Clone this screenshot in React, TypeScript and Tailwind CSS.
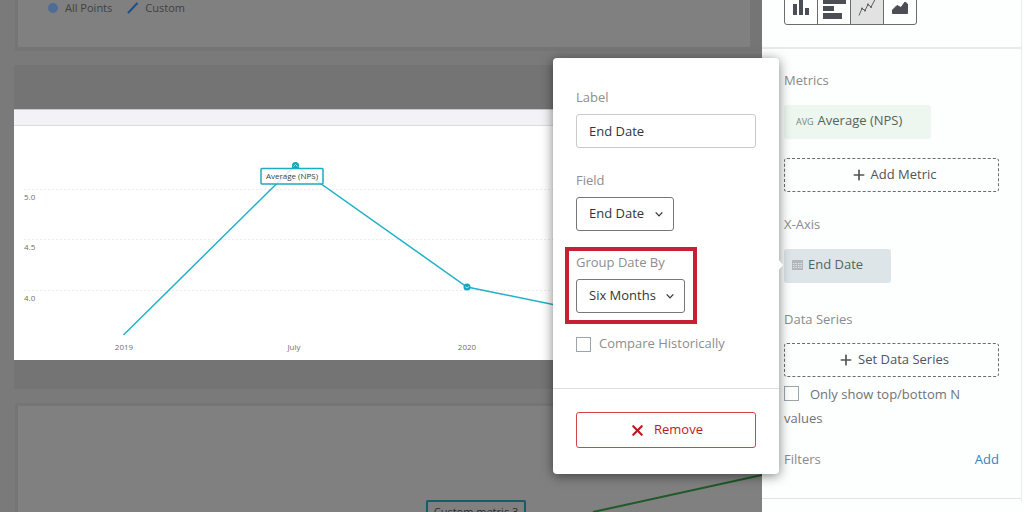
import type { ReactNode } from "react";
import { Plus, X } from "lucide-react";

type SelectFieldProps = {
  id: string;
  label: string;
  value: string;
};

const gridLines = [
  { y: 63, label: "5.0" },
  { y: 113, label: "4.5" },
  { y: 164, label: "4.0" },
];

const xLabels = [
  { x: 110, label: "2019" },
  { x: 280, label: "July" },
  { x: 453, label: "2020" },
];

function SelectField({ id, label, value }: SelectFieldProps) {
  return (
    <div>
      <label htmlFor={id} className="block leading-5 text-[#8e8e8e]">
        {label}
      </label>
      <div className="relative mt-[7px] w-fit">
        <select
          id={id}
          className="block h-[34px] appearance-none rounded-[3px] border border-[#75787b] bg-white pl-3 pr-7 text-[#32363a]"
        >
          <option>{value}</option>
        </select>
        <svg className="pointer-events-none absolute right-[11px] top-[14px]" width="8" height="7" viewBox="0 0 8 7" fill="none">
          <path d="M0.7 1.3 L4 4.8 L7.3 1.3" stroke="#32363a" strokeWidth="1.2" />
        </svg>
      </div>
    </div>
  );
}

function DatePopover() {
  return (
    <section className="absolute right-[245px] top-[58px] w-[226px] rounded-[4px] bg-white shadow-[0_2px_12px_rgba(0,0,0,0.5)]">
      <div className="px-[23px] pt-[29px]">
        <label htmlFor="label" className="block leading-5 text-[#8e8e8e]">
          Label
        </label>
        <input
          id="label"
          defaultValue="End Date"
          className="mt-[7px] block h-[34px] w-full rounded-[3px] border border-[#c9cacc] px-3 text-[#32363a]"
        />
        <div className="mt-[22px]">
          <SelectField id="field" label="Field" value="End Date" />
        </div>
        <div className="-ml-[11px] mt-4 w-fit border-4 border-[#c62034] py-[7px] pl-[7px] pr-2 pt-px">
          <SelectField id="group" label="Group Date By" value="Six Months" />
        </div>
        <label className="mt-[10px] flex h-5 items-center gap-2 text-[#8e8e8e]">
          <input type="checkbox" className="size-[15px] appearance-none border border-[#9aa5ad] bg-white" />
          Compare Historically
        </label>
      </div>
      <div className="mt-[34px] border-t border-[#dedede] px-[23px] pb-[26px] pt-[23px]">
        <button className="flex h-9 w-full items-center justify-center gap-2 rounded-[3px] border border-[#d0444a] text-[#c4161c]">
          <X size={17} strokeWidth={3} />
          Remove
        </button>
      </div>
      <svg className="absolute -right-[5px] top-[201px]" width="6" height="12" viewBox="0 0 6 12">
        <path d="M0 0 L5 6 L0 12 Z" fill="#fff" />
      </svg>
    </section>
  );
}

function TrendChart() {
  return (
    <svg className="block" width="748" height="234" viewBox="0 0 748 234" fontSize="8" fill="#6f6f6f">
      {gridLines.map((line) => (
        <g key={line.label}>
          <line x1="10" x2="748" y1={line.y + 0.5} y2={line.y + 0.5} stroke="#ececec" strokeDasharray="2 2" />
          <text x="10" y={line.y + 11}>
            {line.label}
          </text>
        </g>
      ))}
      {xLabels.map((item) => (
        <text key={item.label} x={item.x} y="224" textAnchor="middle">
          {item.label}
        </text>
      ))}
      <path d="M109.500 209 L281 39.500 L453 161 L539 178.500 L748 221" fill="none" stroke="#21b1c8" strokeWidth="1.500" />
      <circle cx="281.500" cy="39.500" r="3.500" fill="#16a6bf" />
      <path d="M279.500 40.500 L281.500 38.500 L283.500 40.500" fill="none" stroke="#a5e3ed" />
      <circle cx="453" cy="161" r="3.500" fill="#16a6bf" />
      <path d="M451 160.500 L453 162 L455 160.500" fill="none" stroke="#a5e3ed" />
      <rect x="247" y="42.500" width="62" height="15.500" rx="1" fill="#fff" fillOpacity="0.8" stroke="#21a9bd" strokeWidth="1.500" />
      <text x="278" y="53" textAnchor="middle" fill="#3c4043">
        Average (NPS)
      </text>
    </svg>
  );
}

function Dashboard() {
  return (
    <main className="flex min-w-0 flex-1 flex-col overflow-hidden bg-[#7a7a7a]">
      <div className="ml-[15px] h-[51px] border-b-[4px] border-l-[3px] border-r-[12px] border-[#757575] bg-[#808080]">
        <div className="flex items-center pl-[30px] text-[11px] leading-4 text-[#404040]">
          <span className="size-[10px] rounded-full bg-[#4f6c96]" />
          <span className="ml-[7px]">All Points</span>
          <svg className="ml-[15px]" width="12" height="12" viewBox="0 0 12 12">
            <path d="M1.500 10.500 L10 1.500" stroke="#1e4f86" strokeWidth="2" strokeLinecap="round" />
          </svg>
          <span className="ml-[6px]">Custom</span>
        </div>
      </div>
      <div className="ml-[14px] mt-[14px] bg-[#747474] pb-[29px] pt-[44px]">
        <div className="overflow-hidden bg-white">
          <div className="h-[17px] border-b border-t border-b-[#dcdce0] border-t-[#c8c8cc] bg-[#f2f2f7]" />
          <TrendChart />
        </div>
      </div>
      <div className="ml-[15px] mt-[14px] flex-1 overflow-hidden border-l-[3px] border-t-[3px] border-[#757575] bg-[#808080]">
        <svg className="block" width="744" height="106" viewBox="0 0 744 106" fontSize="11">
          <path d="M575 106 L744 69" stroke="#1f5a28" strokeWidth="2" />
          <rect x="409" y="95" width="98" height="24" rx="1" fill="none" stroke="#135c68" strokeWidth="2" />
          <text x="458" y="110" textAnchor="middle" fill="#2c2c2c">
            Custom metric 3
          </text>
        </svg>
      </div>
    </main>
  );
}

function AddButton({ children }: { children: ReactNode }) {
  return (
    <button className="flex h-[34px] w-full items-center justify-center gap-1 rounded-[3px] border border-dashed border-[#6a6d70] pl-1 text-[#505458]">
      <Plus size={16} strokeWidth={2.5} />
      {children}
    </button>
  );
}

function ChartTypes() {
  const cell = "flex h-full w-[33px] items-center justify-center border-r border-[#6a6d70]";
  return (
    <div className="-mt-[10px] flex h-[35px] w-[133px] overflow-hidden rounded-[3px] border border-[#6a6d70]">
      <button aria-label="Column" className={cell}>
        <svg width="16" height="16" viewBox="0 0 16 16" fill="#4b4e54">
          <path d="M0 4h4v11H0zM6 0h4v15H6zM12 8h4v7h-4z" />
        </svg>
      </button>
      <button aria-label="Bar" className={cell}>
        <svg width="24" height="22" viewBox="0 0 24 22" fill="#4b4e54">
          <path d="M1 2h23v5H1zM1 9h11v5H1zM1 16h19v6H1z" />
        </svg>
      </button>
      <button aria-label="Line" className={`${cell} bg-[#e2e2e2]`}>
        <svg width="18" height="18" viewBox="0 0 18 18" fill="none" stroke="#5c5f64">
          <path d="M1 16.500 L4 9.500 L7 11.500 L10 5.500 L13 8 L17 0.500" />
          <path d="M4 9.500h.1M7 11.500h.1M10 5.500h.1M13 8h.1" strokeWidth="2" strokeLinecap="round" />
        </svg>
      </button>
      <button aria-label="Area" className="flex flex-1 items-center justify-center">
        <svg width="16" height="13" viewBox="0 0 16 13" fill="#4b4e54">
          <path d="M0.500 12.500 V9 L5 4.500 L9 6.500 L13 1 L15.500 3 V12.500 Z" stroke="#4b4e54" strokeLinejoin="round" />
        </svg>
      </button>
    </div>
  );
}

function Sidebar() {
  return (
    <aside className="w-[262px] shrink-0 overflow-hidden bg-[#fdfefe]">
      <div className="mr-0.5 h-full border-r border-[#ececee]">
        <div className="border-b-2 border-[#e9e9ea] pb-[22px] pl-[22px]">
          <ChartTypes />
        </div>
        <div className="border-b border-[#e2e3e4] pb-[29px] pl-[22px] pr-[22px] pt-[21px]">
          <h2 className="leading-5 text-[#8b8b8b]">Metrics</h2>
          <button className="mb-[19px] mt-[15px] flex h-[34px] w-[147px] items-center gap-1 rounded-[3px] bg-[#edf6ef] pb-0.5 pl-3 text-[#53655b]">
            <span className="pt-0.5 text-[9px] text-[#78877e]">AVG</span>
            Average (NPS)
          </button>
          <AddButton>Add Metric</AddButton>
          <h2 className="mt-[22px] leading-5 text-[#8b8b8b]">X-Axis</h2>
          <button className="mt-[15px] flex h-[34px] w-[107px] items-center gap-[5px] rounded-[3px] bg-[#dee5e9] pb-0.5 pl-2 text-[#53655b]">
            <svg width="11" height="10" viewBox="0 0 11 10">
              <rect width="11" height="10" fill="#b3b7b9" />
              <path d="M1 3.500h9M1 5.500h9M1 7.500h9" stroke="#dee5e9" strokeDasharray="1.500 1" />
            </svg>
            End Date
          </button>
          <h2 className="mb-[14px] mt-[26px] leading-5 text-[#8b8b8b]">Data Series</h2>
          <AddButton>Set Data Series</AddButton>
          <label className="mt-[5px] block leading-6 text-[#717375]">
            <input
              type="checkbox"
              className="mr-[11px] size-[15px] appearance-none border border-[#9aa5ad] bg-white align-[-2px]"
            />
            Only show top/bottom N values
          </label>
          <div className="mt-[19px] flex items-center justify-between leading-5">
            <h2 className="text-[#8b8b8b]">Filters</h2>
            <a href="#filters" className="text-[#3a7fc0]">
              Add
            </a>
          </div>
        </div>
      </div>
    </aside>
  );
}

export default function App() {
  return (
    <div className="relative flex h-screen overflow-hidden font-['Open_Sans','Noto_Sans',sans-serif] text-[13px]">
      <Dashboard />
      <Sidebar />
      <DatePopover />
    </div>
  );
}
